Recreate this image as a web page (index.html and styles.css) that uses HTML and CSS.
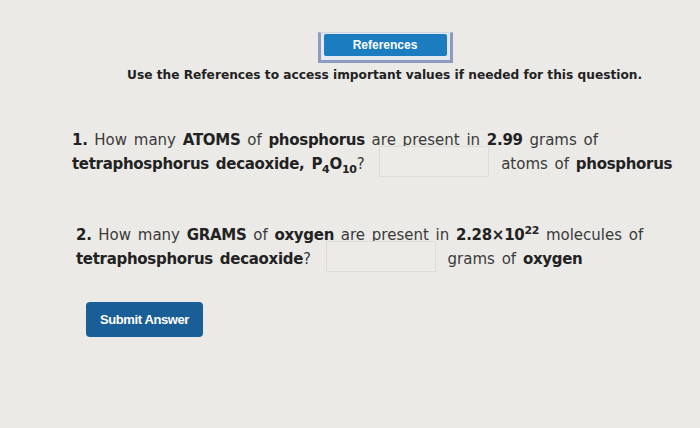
FILE: index.html
```html
<!DOCTYPE html>
<html>
<head>
<meta charset="utf-8">
<link rel="stylesheet" href="styles.css">
</head>
<body>
<div class="page">
  <div class="ref-wrap">
    <div class="ref-frame"><button class="ref-btn">References</button></div>
  </div>
  <p class="note">Use the References to access important values if needed for this question.</p>

  <div class="question q1">
    <b>1.</b> How many <b>ATOMS</b> of <b>phosphorus</b> are present in <b>2.99</b> grams of<br>
    <b>tetraphosphorus decaoxide, P<sub>4</sub>O<sub>10</sub></b>? <span class="answer q1a"></span> atoms of <b>phosphorus</b>
  </div>

  <div class="question q2">
    <b>2.</b> How many <b>GRAMS</b> of <b>oxygen</b> are present in <b>2.28&times;10<sup>22</sup></b> molecules of<br>
    <b>tetraphosphorus decaoxide</b>? <span class="answer q2a"></span> grams of <b>oxygen</b>
  </div>

  <button class="submit">Submit Answer</button>
</div>
</body>
</html>
```

FILE: styles.css
```css
html, body {
  margin: 0;
  padding: 0;
  background: #ebeae7;
}
.page {
  width: 700px;
  height: 428px;
  box-sizing: border-box;
  padding: 32px 0 0 0;
  font-family: "DejaVu Sans", Verdana, sans-serif;
  color: #222;
}
.ref-wrap {
  display: flex;
  justify-content: center;
  padding-left: 70px;
}
.ref-frame {
  width: 135px;
  height: 31px;
  box-sizing: border-box;
  border: 3px solid #8c9cc0;
  border-top: 1px solid #cfd6e3;
  background: #e4e8f0;
  padding: 1px 3px 0 3px;
}
.ref-btn {
  display: block;
  width: 100%;
  height: 22px;
  border: 0;
  border-radius: 2px;
  background: #1c7cc0;
  color: #fff;
  font-family: "Liberation Sans", Arial, sans-serif;
  font-weight: bold;
  font-size: 12px;
  padding: 0;
}
.note {
  margin: 5px 0 0 127px;
  font-size: 12.2px;
  line-height: 15px;
  font-weight: bold;
  color: #222;
}
.question {
  font-size: 15px;
  line-height: 24px;
  color: #3a3a3a;
  word-spacing: 2px;
}
.question b {
  color: #222;
  letter-spacing: -0.3px;
}
.q1 { margin: 45px 0 0 72px; }
.q2 { margin: 47px 0 0 76px; }
sub, sup { font-size: 11px; line-height: 0; }
.answer {
  display: inline-block;
  width: 108px;
  height: 29px;
  vertical-align: baseline;
  margin: -10px 5px -8px 8px;
  border: 1px solid #dddcd9;
  background: #ecebe8;
}
.submit {
  display: block;
  margin: 31px 0 0 86px;
  width: 117px;
  height: 35px;
  border: 0;
  border-radius: 4px;
  background: #1a5e98;
  color: #fff;
  font-family: "Liberation Sans", Arial, sans-serif;
  font-weight: bold;
  font-size: 13px;
  letter-spacing: -0.4px;
}
```
